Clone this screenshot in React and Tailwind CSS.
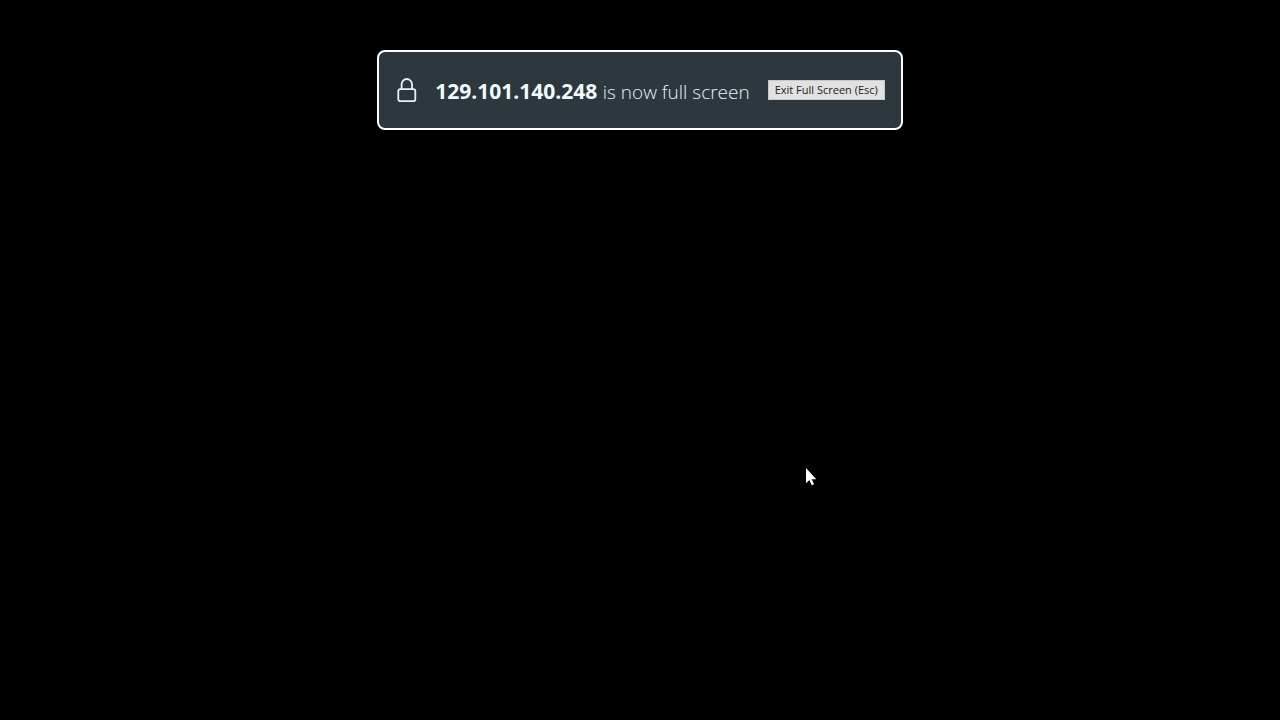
function LockIcon() {
  return (
    <svg
      width="20"
      height="24"
      viewBox="0 0 20 24"
      fill="none"
      stroke="#e6f1f5"
      strokeWidth="1.8"
      strokeLinejoin="round"
      className="shrink-0"
      aria-hidden="true"
    >
      <rect x="1.3" y="11.2" width="17" height="12" rx="2" />
      <path d="M4.6 11.2V6.2a5.2 5.2 0 0 1 10.4 0v5" />
    </svg>
  );
}

function Pointer() {
  return (
    <svg
      width="12"
      height="19"
      viewBox="0 0 12 19"
      className="pointer-events-none absolute left-[805px] top-[467px]"
      aria-hidden="true"
    >
      <path
        d="M1 1v15.2l3.4-3.2 2.3 5.2 2.3-1-2.3-5h4.6z"
        fill="#fff"
      />
    </svg>
  );
}

export default function App() {
  return (
    <main className="relative flex min-h-screen items-start justify-center bg-black pt-[50px] font-['Open_Sans',sans-serif]">
      <div
        role="status"
        className="flex h-20 items-center rounded-lg border-2 border-white bg-[#2c383d] pl-[18px] pr-4"
      >
        <LockIcon />
        <p className="ml-[18px] whitespace-nowrap pt-0.5 text-[19px] leading-7 font-light text-[#e6f1f5]">
          <strong className="text-[21px] font-bold text-[#f2faff]">129.101.140.248 </strong>
          is now full screen
        </p>
        <button
          type="button"
          className="ml-[18px] h-5 whitespace-nowrap border border-[#c8c8c8] bg-[#e1e1e1] px-1.5 text-[11px] leading-4 text-[#1c1c1c]"
        >
          Exit Full Screen (Esc)
        </button>
      </div>
      <Pointer />
    </main>
  );
}
